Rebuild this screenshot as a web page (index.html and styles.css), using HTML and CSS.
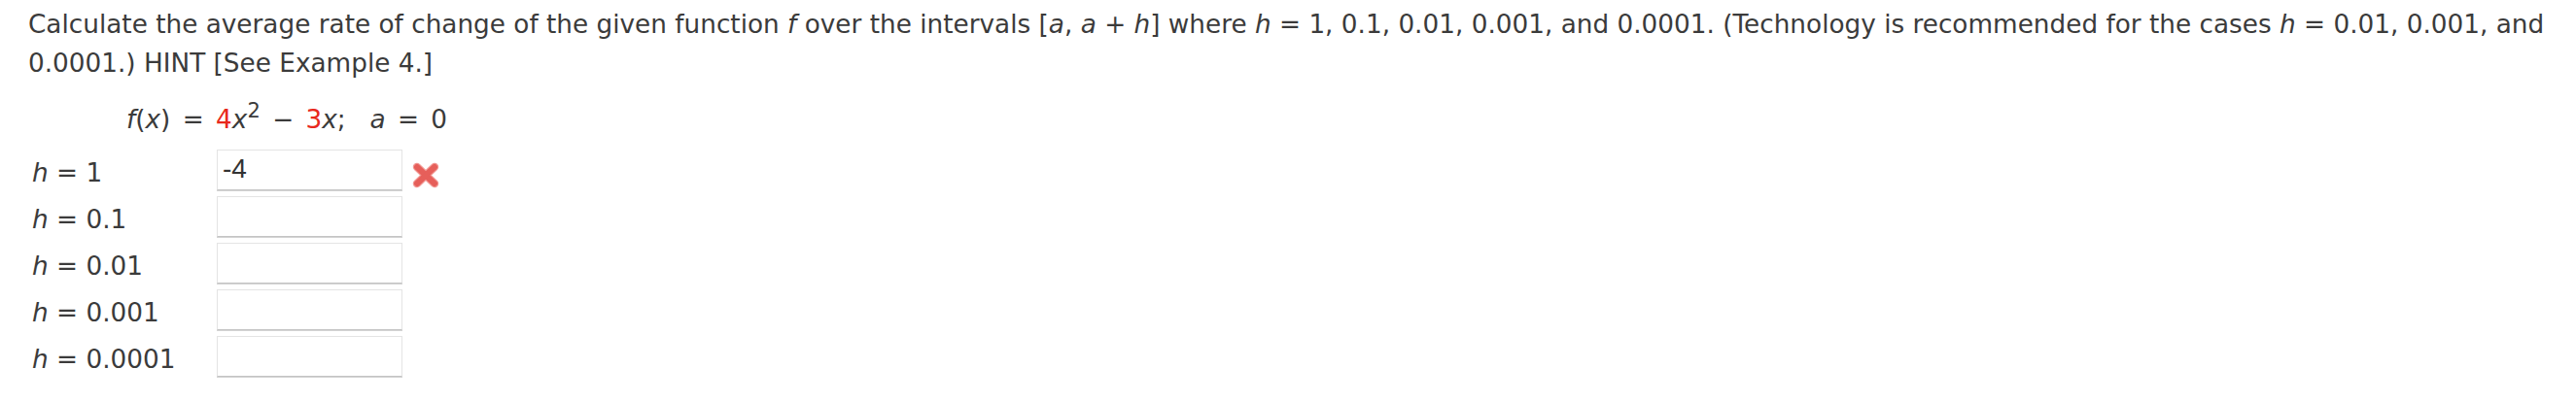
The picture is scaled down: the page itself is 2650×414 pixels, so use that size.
FILE: index.html
```html
<!DOCTYPE html>
<html>
<head>
<meta charset="utf-8">
<link rel="stylesheet" href="styles.css">
</head>
<body>
<div class="question">
  <p class="prompt">Calculate the average rate of change of the given function <i>f</i> over the intervals [<i>a</i>, <i>a</i> + <i>h</i>] where <i>h</i> = 1, 0.1, 0.01, 0.001, and 0.0001. (Technology is recommended for the cases <i>h</i> = 0.01, 0.001, and 0.0001.) HINT [See Example 4.]</p>
  <p class="func"><i>f</i>(<i>x</i>) = <span class="red">4</span><i>x</i><sup>2</sup> &minus; <span class="red">3</span><i>x</i>; &nbsp;<i>a</i> = 0</p>
  <div class="rows">
    <div class="row">
      <span class="label"><i>h</i> = 1</span>
      <span class="box">-4</span>
      <svg class="mark" width="28" height="27" viewBox="0 0 28 27">
        <g stroke-linecap="round">
          <line x1="5" y1="5" x2="23" y2="22" stroke="#f29a96" stroke-width="8.5"/>
          <line x1="23" y1="5" x2="5" y2="22" stroke="#f29a96" stroke-width="8.5"/>
          <line x1="5" y1="5" x2="23" y2="22" stroke="#e65f5a" stroke-width="6"/>
          <line x1="23" y1="5" x2="5" y2="22" stroke="#e65f5a" stroke-width="6"/>
        </g>
      </svg>
    </div>
    <div class="row">
      <span class="label"><i>h</i> = 0.1</span>
      <span class="box"></span>
    </div>
    <div class="row">
      <span class="label"><i>h</i> = 0.01</span>
      <span class="box"></span>
    </div>
    <div class="row">
      <span class="label"><i>h</i> = 0.001</span>
      <span class="box"></span>
    </div>
    <div class="row">
      <span class="label"><i>h</i> = 0.0001</span>
      <span class="box"></span>
    </div>
  </div>
</div>
</body>
</html>
```
FILE: styles.css
```css
html, body {
  margin: 0;
  padding: 0;
  background: #ffffff;
}
body {
  font-family: "DejaVu Sans", Verdana, sans-serif;
  font-size: 26.3px;
  color: #3b3b3b;
}
.question {
  padding: 5px 20px 0 29px;
}
.prompt {
  margin: 0;
  line-height: 40px;
}
.func {
  margin: 18px 0 0 101px;
  line-height: 40px;
  word-spacing: 4px;
}
.func sup {
  font-size: 0.8em;
  line-height: 0;
  vertical-align: 0.5em;
}
.red {
  color: #e8281c;
}
.rows {
  margin-top: 11px;
  display: flex;
  flex-direction: column;
  gap: 5px;
}
.row {
  display: flex;
  align-items: center;
  height: 43px;
}
.label {
  width: 190px;
  padding-left: 4px;
  line-height: 40px;
  padding-top: 4px;
}
.box {
  box-sizing: border-box;
  width: 191px;
  height: 42px;
  margin-bottom: 1px;
  border: 1px solid #e4e4e4;
  border-bottom-color: #c4c4c4;
  box-shadow: 0 1px 0 #d4d4d4;
  background: #fff;
  font-family: "Liberation Sans", Arial, sans-serif;
  font-size: 28px;
  color: #333;
  padding: 3px 0 0 5px;
  line-height: 32px;
}
.mark {
  margin-left: 10px;
  margin-top: 10px;
}
```
